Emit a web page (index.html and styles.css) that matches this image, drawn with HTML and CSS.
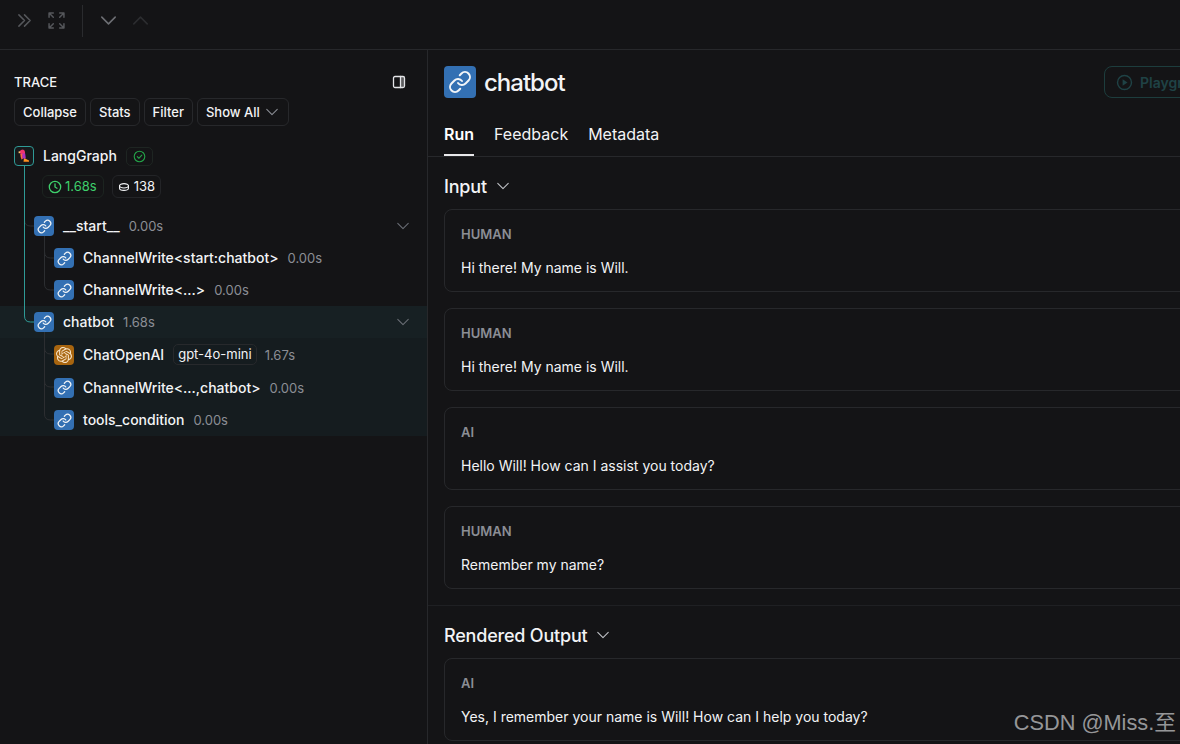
FILE: index.html

```html
<!DOCTYPE html>
<html lang="en">
<head>
  <meta charset="UTF-8" />
  <meta name="viewport" content="width=device-width, initial-scale=1.0"/>
  <title>chatbot trace</title>
  <link rel="stylesheet" href="styles.css">
</head>
<body>
  <svg class="defs" width="0" height="0">
    <symbol id="link" viewBox="0 0 24 24">
      <path d="M10 13a5 5 0 0 0 7.54.54l3-3a5 5 0 0 0-7.07-7.07l-1.72 1.71"/>
      <path d="M14 11a5 5 0 0 0-7.54-.54l-3 3a5 5 0 0 0 7.07 7.07l1.71-1.71"/>
    </symbol>
    <symbol id="down" viewBox="0 0 24 24">
      <path d="M5 8.5l7 7 7-7"/>
    </symbol>
  </svg>

  <header class="topbar">
    <svg class="top-icon" viewBox="0 0 16 16"><path d="M2 2l6 6-6 6M8 2l6 6-6 6"/></svg>
    <svg class="top-icon expand" viewBox="0 0 16 16"><path d="M1 5V1h4M1 1l4 4M11 1h4v4M15 1l-4 4M1 11v4h4M1 15l4-4M15 11v4h-4M15 15l-4-4"/></svg>
    <span class="top-divider"></span>
    <svg class="top-chev"><use href="#down"/></svg>
    <svg class="top-chev up"><use href="#down"/></svg>
  </header>

  <main class="layout">
    <aside class="sidebar">
      <div class="trace-head">
        <span class="trace-title">TRACE</span>
        <svg class="panel-icon" viewBox="0 0 14 14"><rect x="1.5" y="1.5" width="11" height="11" rx="1.5"/><path d="M8.5 1.5v11"/><path class="fill" d="M8.5 2h3.5v10H8.5z"/></svg>
      </div>
      <div class="trace-buttons">
        <button class="btn">Collapse</button>
        <button class="btn">Stats</button>
        <button class="btn">Filter</button>
        <button class="btn">Show All <svg class="chev"><use href="#down"/></svg></button>
      </div>

      <div class="tree">
        <svg class="connectors" width="427" height="300" viewBox="0 0 427 300">
          <path class="line" d="M24.5 72v2q0 6 6 6h4"/>
          <path class="line" d="M44.5 90v48q0 6 6 6h4M44.5 106q0 6 6 6h4"/>
          <path class="line" d="M44.5 186v82q0 6 6 6h4M44.5 202q0 6 6 6h4M44.5 235q0 6 6 6h4"/>
          <path class="teal" d="M24.5 20v150q0 6 6 6h4"/>
        </svg>

        <div class="root-row">
          <span class="icon root-icon">
            <svg viewBox="0 0 16 16" width="16" height="16">
              <path fill="#ff8f1f" d="M8 10l5 2.6v1.2H7.5z"/>
              <path fill="#f0346f" d="M3.6 3.4Q4.6 1.4 7 1.4q2 .5 2 2.6v3H5z"/>
              <path fill="#ff6a3d" d="M4.4 6h2.4v4.4l-1.2 1.4Q4.4 9.6 4.4 6z"/>
              <path fill="#b02fc0" d="M6.4 5.6H9.2l.6 5H6.4z"/>
              <path fill="#ffc36b" d="M2.6 3.4h1.6v1.8H2.6z"/>
            </svg>
          </span>
          <span class="name root-name">LangGraph</span>
          <span class="status-chip">
            <svg viewBox="0 0 14 14" width="13" height="13"><circle cx="7" cy="7" r="5.7"/><path d="M4.6 7.2l1.7 1.7 3.2-3.4"/></svg>
          </span>
        </div>
        <div class="metrics">
          <span class="chip time">
            <svg viewBox="0 0 14 14" width="14" height="14"><circle cx="7" cy="7" r="5.7"/><path d="M7 3.8V7l2 1.2"/></svg>
            1.68s
          </span>
          <span class="chip tokens">
            <svg viewBox="0 0 14 14" width="12" height="12"><ellipse cx="7" cy="5.6" rx="5.2" ry="2.6"/><path d="M1.8 5.6v2.8c0 1.4 2.3 2.6 5.2 2.6s5.2-1.2 5.2-2.6V5.6"/></svg>
            138
          </span>
        </div>

        <div class="row depth-1">
          <span class="icon blue"><svg><use href="#link"/></svg></span>
          <span class="name">__start__</span>
          <span class="dur">0.00s</span>
          <svg class="row-chev"><use href="#down"/></svg>
        </div>
        <div class="row depth-2">
          <span class="icon blue"><svg><use href="#link"/></svg></span>
          <span class="name">ChannelWrite&lt;start:chatbot&gt;</span>
          <span class="dur">0.00s</span>
        </div>
        <div class="row depth-2">
          <span class="icon blue"><svg><use href="#link"/></svg></span>
          <span class="name">ChannelWrite&lt;...&gt;</span>
          <span class="dur">0.00s</span>
        </div>

        <div class="group">
          <div class="row depth-1 selected">
            <span class="icon blue"><svg><use href="#link"/></svg></span>
            <span class="name">chatbot</span>
            <span class="dur">1.68s</span>
            <svg class="row-chev"><use href="#down"/></svg>
          </div>
          <div class="row depth-2 tall">
            <span class="icon orange">
              <svg viewBox="0 0 24 24" class="knot">
                <path d="M22.2819 9.8211a5.9847 5.9847 0 0 0-.5157-4.9108 6.0462 6.0462 0 0 0-6.5098-2.9A6.0651 6.0651 0 0 0 4.9807 4.1818a5.9847 5.9847 0 0 0-3.9977 2.9 6.0462 6.0462 0 0 0 .7427 7.0966 5.98 5.98 0 0 0 .511 4.9107 6.051 6.051 0 0 0 6.5146 2.9001A5.9847 5.9847 0 0 0 13.2599 24a6.0557 6.0557 0 0 0 5.7718-4.2058 5.9894 5.9894 0 0 0 3.9977-2.9001 6.0557 6.0557 0 0 0-.7475-7.0729zm-9.022 12.6081a4.4755 4.4755 0 0 1-2.8764-1.0408l.1419-.0804 4.7783-2.7582a.7948.7948 0 0 0 .3927-.6813v-6.7369l2.02 1.1686a.071.071 0 0 1 .038.052v5.5826a4.504 4.504 0 0 1-4.4945 4.4944zm-9.6607-4.1254a4.4708 4.4708 0 0 1-.5346-3.0137l.142.0852 4.783 2.7582a.7712.7712 0 0 0 .7806 0l5.8428-3.3685v2.3324a.0804.0804 0 0 1-.0332.0615L9.74 19.9502a4.4992 4.4992 0 0 1-6.1408-1.6464zM2.3408 7.8956a4.485 4.485 0 0 1 2.3655-1.9728V11.6a.7664.7664 0 0 0 .3879.6765l5.8144 3.3543-2.0201 1.1685a.0757.0757 0 0 1-.071 0l-4.8303-2.7865A4.504 4.504 0 0 1 2.3408 7.872zm16.5963 3.8558L13.1038 8.364 15.1192 7.2a.0757.0757 0 0 1 .071 0l4.8303 2.7913a4.4944 4.4944 0 0 1-.6765 8.1042v-5.6772a.79.79 0 0 0-.407-.667zm2.0107-3.0231l-.142-.0852-4.7735-2.7818a.7759.7759 0 0 0-.7854 0L9.409 9.2297V6.8974a.0662.0662 0 0 1 .0284-.0615l4.8303-2.7866a4.4992 4.4992 0 0 1 6.6802 4.66zM8.3065 12.863l-2.02-1.1638a.0804.0804 0 0 1-.038-.0567V6.0742a4.4992 4.4992 0 0 1 7.3757-3.4537l-.142.0805L8.704 5.459a.7948.7948 0 0 0-.3927.6813zm1.0976-2.3654l2.602-1.4998 2.6069 1.4998v2.9994l-2.5974 1.4997-2.6067-1.4997Z"/>
              </svg>
            </span>
            <span class="name">ChatOpenAI</span>
            <span class="model">gpt-4o-mini</span>
            <span class="dur">1.67s</span>
          </div>
          <div class="row depth-2 tall">
            <span class="icon blue"><svg><use href="#link"/></svg></span>
            <span class="name">ChannelWrite&lt;...,chatbot&gt;</span>
            <span class="dur">0.00s</span>
          </div>
          <div class="row depth-2">
            <span class="icon blue"><svg><use href="#link"/></svg></span>
            <span class="name">tools_condition</span>
            <span class="dur">0.00s</span>
          </div>
        </div>
      </div>
    </aside>

    <section class="detail">
      <div class="detail-head">
        <div class="title-wrap">
          <span class="title-icon"><svg><use href="#link"/></svg></span>
          <h1>chatbot</h1>
        </div>
        <button class="playground">
          <svg viewBox="0 0 18 18" width="17" height="17"><circle cx="9" cy="9" r="7.4"/><path class="tri" d="M7 5.6L12.2 9 7 12.4z"/></svg>
          Playground
        </button>
      </div>

      <nav class="tabs">
        <span class="tab active">Run</span>
        <span class="tab">Feedback</span>
        <span class="tab">Metadata</span>
      </nav>

      <div class="block input-block">
        <h2>Input <svg class="chev"><use href="#down"/></svg></h2>
        <div class="card"><div class="role">HUMAN</div><p>Hi there! My name is Will.</p></div>
        <div class="card"><div class="role">HUMAN</div><p>Hi there! My name is Will.</p></div>
        <div class="card"><div class="role">AI</div><p>Hello Will! How can I assist you today?</p></div>
        <div class="card"><div class="role">HUMAN</div><p>Remember my name?</p></div>
      </div>

      <div class="block output-block">
        <h2>Rendered Output <svg class="chev"><use href="#down"/></svg></h2>
        <div class="card"><div class="role">AI</div><p>Yes, I remember your name is Will! How can I help you today?</p></div>
      </div>
    </section>
  </main>

  <div class="watermark">CSDN @Miss.至</div>
</body>
</html>
```

FILE: styles.css

```css
:root {
  --bg: #141416;
  --line: #27282b;
  --text: #f2f3f5;
  --muted: #8b8e95;
  --blue: #3370b3;
  --teal: #2f9a96;
}

html, body {
  height: 100%;
}

body {
  margin: 0;
  height: 744px;
  overflow: hidden;
  background-color: var(--bg);
  color: var(--text);
  font-family: Inter, "Noto Sans", sans-serif;
  position: relative;
}

.defs {
  position: absolute;
}

svg {
  fill: none;
  stroke: currentColor;
  stroke-linecap: round;
  stroke-linejoin: round;
}

/* top bar */
.topbar {
  height: 41px;
  border-bottom: 1px solid var(--line);
  display: flex;
  align-items: center;
  padding: 0 0 8px 17px;
  color: #55575b;
}

.top-icon {
  width: 15px;
  height: 15px;
  stroke-width: 1.6;
  margin-right: 16px;
}

.top-icon.expand {
  width: 17px;
  height: 17px;
  stroke-width: 1.4;
}

.top-divider {
  width: 1px;
  height: 32px;
  background-color: #2a2b2e;
  margin: 0 14px 0 1px;
}

.top-chev {
  width: 23px;
  height: 23px;
  stroke-width: 1.6;
  margin-right: 9px;
  color: #6d6f74;
}

.top-chev.up {
  transform: rotate(180deg);
  color: #2c2d30;
}

.layout {
  display: flex;
  height: 694px;
}

/* left side */
.sidebar {
  width: 427px;
  flex-shrink: 0;
  border-right: 1px solid var(--line);
  padding-top: 24px;
}

.trace-head {
  display: flex;
  align-items: center;
  justify-content: space-between;
  padding: 0 21px 0 14px;
  height: 16px;
}

.trace-title {
  font-size: 13px;
  line-height: 16px;
  font-weight: 500;
}

.panel-icon {
  width: 14px;
  height: 14px;
  stroke-width: 1.3;
  color: #e4e5e8;
}

.panel-icon .fill {
  fill: #e4e5e8;
  stroke: none;
  opacity: 0.35;
}

.trace-buttons {
  display: flex;
  gap: 4px;
  padding: 8px 0 0 14px;
}

.btn {
  height: 28px;
  box-sizing: border-box;
  padding: 0 8px;
  display: flex;
  align-items: center;
  gap: 3px;
  background-color: transparent;
  border: 1px solid var(--line);
  border-radius: 6px;
  color: var(--text);
  font-family: inherit;
  font-size: 13px;
  font-weight: 500;
}

.chev {
  width: 18px;
  height: 18px;
  stroke-width: 1.4;
  color: #8b8e95;
  margin-right: -1px;
}

.tree {
  position: relative;
  margin-top: 20px;
}

.connectors {
  position: absolute;
  left: 0;
  top: 0;
  z-index: 1;
}

.connectors .line {
  stroke: #2c2e31;
  stroke-width: 1;
}

.connectors .teal {
  stroke: var(--teal);
  stroke-width: 1;
}

.icon {
  width: 20px;
  height: 20px;
  flex-shrink: 0;
  border-radius: 4px;
  display: flex;
  align-items: center;
  justify-content: center;
  position: relative;
  z-index: 2;
}

.icon svg {
  width: 15px;
  height: 15px;
  color: #f4f6f8;
  stroke-width: 2;
}

.icon.blue {
  background-color: var(--blue);
}

.icon.orange {
  background-color: #a8650f;
}

.icon svg.knot {
  width: 16px;
  height: 16px;
  fill: #f6e3c8;
  stroke: none;
}

.root-row {
  display: flex;
  align-items: center;
  height: 20px;
  padding-left: 14px;
}

.root-icon {
  box-sizing: border-box;
  border: 1px solid var(--teal);
  background-color: #17191b;
}

.root-icon svg {
  width: 16px;
  height: 16px;
  stroke: none;
}

.name {
  font-size: 14px;
  line-height: 16px;
  font-weight: 500;
  white-space: nowrap;
}

.root-name {
  margin-left: 9px;
}

.status-chip {
  margin-left: 9px;
  width: 25px;
  height: 17px;
  border: 1px solid #1e2522;
  border-radius: 5px;
  display: flex;
  align-items: center;
  justify-content: center;
  color: #24a148;
}

.status-chip svg {
  stroke-width: 1.2;
}

.metrics {
  display: flex;
  gap: 8px;
  padding: 9px 0 0 42px;
  height: 23px;
}

.chip {
  height: 23px;
  box-sizing: border-box;
  padding: 0 6px 1px 5px;
  display: flex;
  align-items: center;
  gap: 3px;
  border: 1px solid #232427;
  border-radius: 6px;
  font-size: 13px;
  line-height: 16px;
}

.chip.time {
  color: #3ecf6b;
  border-color: #1c2420;
}

.chip.tokens {
  padding: 0 5px 1px;
  gap: 4px;
}

.chip svg {
  stroke-width: 1.3;
  margin-top: 1px;
}

.row {
  position: relative;
  display: flex;
  align-items: center;
  height: 32px;
  gap: 9px;
}

.row.tall {
  height: 33px;
}

.metrics + .row {
  margin-top: 12px;
}

.depth-1 {
  padding-left: 34px;
}

.depth-2 {
  padding-left: 54px;
}

.dur {
  font-size: 13px;
  line-height: 16px;
  color: var(--muted);
  white-space: nowrap;
}

.row-chev {
  position: absolute;
  right: 15px;
  top: 7px;
  width: 18px;
  height: 18px;
  stroke-width: 1.4;
  color: #6a6e75;
}

.group {
  background-color: #151c1f;
}

.selected {
  background-color: #172023;
}

.model {
  font-size: 13px;
  padding: 0 4px;
  height: 21px;
  line-height: 19px;
  box-sizing: border-box;
  border: 1px solid #27292c;
  border-radius: 5px;
  margin-right: -1px;
}

/* right side */
.detail {
  flex: 1;
  min-width: 0;
  overflow: hidden;
}

.detail-head {
  display: flex;
  align-items: center;
  justify-content: space-between;
  padding: 16px 0 0 16px;
  height: 32px;
}

.title-wrap {
  display: flex;
  align-items: center;
  gap: 8px;
}

.title-icon {
  width: 32px;
  height: 32px;
  background-color: var(--blue);
  border-radius: 4px;
  display: flex;
  align-items: center;
  justify-content: center;
}

.title-icon svg {
  width: 24px;
  height: 24px;
  stroke-width: 2;
  color: #f2f5f8;
}

h1 {
  margin: 0;
  font-size: 24px;
  font-weight: 500;
  letter-spacing: -1px;
}

.playground {
  flex-shrink: 0;
  width: 120px;
  margin-right: -44px;
  height: 32px;
  box-sizing: border-box;
  padding: 0 0 0 11px;
  display: flex;
  align-items: center;
  gap: 7px;
  background-color: transparent;
  border: 1px solid #1d3d3d;
  border-radius: 8px;
  color: #1f4245;
  font-family: inherit;
  font-size: 14px;
  font-weight: 600;
  overflow: hidden;
}

.playground svg {
  flex-shrink: 0;
  stroke-width: 1.5;
}

.playground .tri {
  fill: currentColor;
  stroke: none;
}

.tabs {
  display: flex;
  gap: 20px;
  margin-top: 16px;
  padding-left: 16px;
  height: 43px;
  box-sizing: border-box;
  border-bottom: 1px solid var(--line);
}

.tab {
  font-size: 16px;
  line-height: 40px;
  height: 42px;
  box-sizing: border-box;
  color: var(--text);
}

.tab.active {
  font-weight: 600;
  color: #fff;
  border-bottom: 2px solid #e8e8ea;
}

.block {
  padding-left: 16px;
}

.block h2 {
  margin: 0;
  height: 22px;
  font-size: 18px;
  font-weight: 500;
  letter-spacing: -0.2px;
  display: flex;
  align-items: center;
  gap: 7px;
}

.block h2 .chev {
  color: #c2c4c8;
}

.input-block {
  padding-top: 18px;
  padding-bottom: 16px;
  border-bottom: 1px solid #1f2023;
}

.output-block {
  padding-top: 18px;
}

.card {
  width: 900px;
  height: 83px;
  box-sizing: border-box;
  margin-bottom: 16px;
  padding: 16px 16px 0;
  border: 1px solid var(--line);
  border-radius: 8px;
}

.block h2 + .card {
  margin-top: 12px;
}

.input-block .card:last-child {
  margin-bottom: 0;
}

.role {
  font-size: 13px;
  line-height: 16px;
  font-weight: 600;
  color: var(--muted);
}

.card p {
  margin: 17px 0 0;
  font-size: 14px;
  line-height: 17px;
}

.watermark {
  position: absolute;
  right: 4px;
  top: 710px;
  font-family: "Liberation Sans", "Noto Sans CJK SC", sans-serif;
  font-size: 21.75px;
  line-height: 26px;
  color: #a4a5a7;
  opacity: 0.9;
}
```
